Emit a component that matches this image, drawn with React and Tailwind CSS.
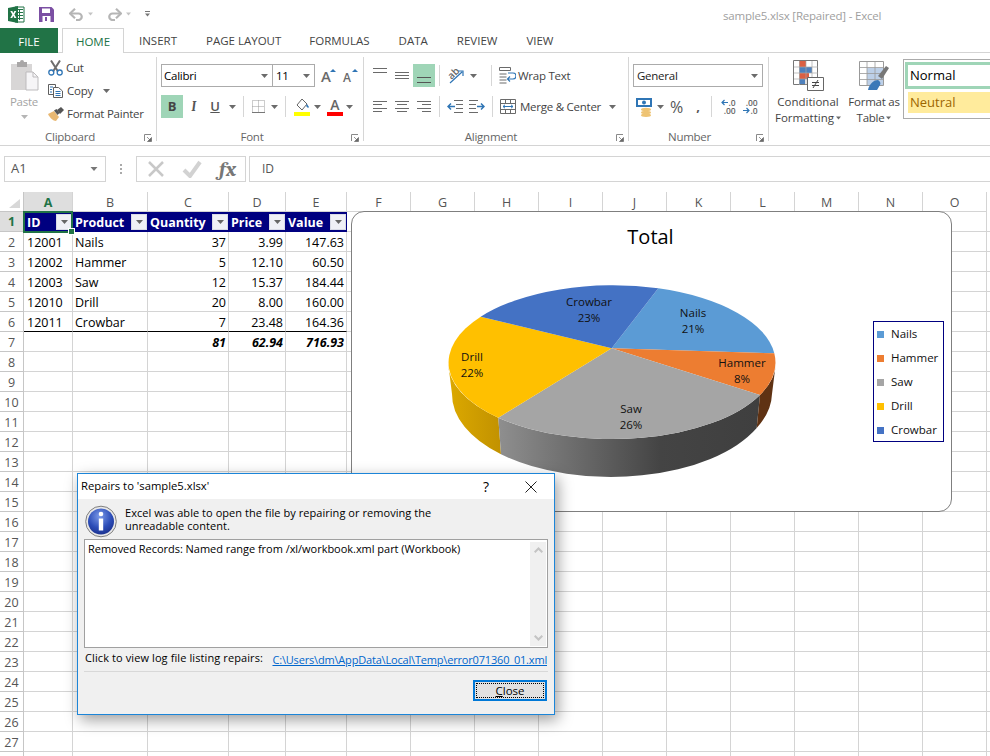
import React from 'react';

const Caret = ({ c = '#6b6b6b', w = 7 }) => (
  <svg width={w} height="4" viewBox="0 0 7 4" className="shrink-0"><path d="M0 0h7L3.5 4z" fill={c} /></svg>
);

const Lines = ({ rows, c = '#6a6a6a', w = 14, h = 14 }) => (
  <svg width={w} height={h} viewBox={`0 0 ${w} ${h}`} className="shrink-0">
    {rows.map((r, i) => <rect key={i} x={r[0]} y={r[1]} width={r[2]} height="1" fill={r[3] || c} />)}
  </svg>
);

const Launcher = () => (
  <svg width="8" height="8" viewBox="0 0 8 8" className="absolute right-[4px] top-[5px]">
    <path d="M.5 7V.5H7" fill="none" stroke="#8a8a8a" />
    <path d="M3 3l3 3M7.5 3.5v4h-4z" stroke="#6a6a6a" fill="#6a6a6a" strokeWidth=".7" />
  </svg>
);

const GroupLabel = ({ children, pad }) => (
  <div className={`relative mt-auto h-[16px] flex justify-center items-center text-[#666] ${pad}`}>
    <span>{children}</span>
    <Launcher />
  </div>
);

const Sep = () => <div className="w-px h-[84px] mt-[4px] bg-[#d6d6d6] shrink-0" />;
const MiniSep = () => <div className="w-px h-[21px] bg-[#d6d6d6] shrink-0" />;

const ExcelLogo = () => (
  <svg width="17" height="17" viewBox="0 0 17 17">
    <path d="M7 1h9v15H7z" fill="#fff" stroke="#217346" />
    <path d="M10 3.500h5M10 6.500h5M10 9.500h5M10 12.500h5" stroke="#217346" />
    <path d="M11.500 3v11" stroke="#217346" />
    <path d="M0 2l10-2v17L0 15z" fill="#217346" />
    <path d="M2.300 5h2l1 2.200L6.400 5h1.900L6.400 8.500l2 3.500h-2L5.300 9.700 4.200 12H2.300l2-3.500z" fill="#fff" />
  </svg>
);

const SaveIcon = () => (
  <svg width="15" height="15" viewBox="0 0 15 15">
    <path d="M0 0h12.500L15 2.500V15H0z" fill="#7b4fa3" />
    <path d="M3 1.500h8V6H3z" fill="#fff" />
    <path d="M3.500 9h8v6h-8z" fill="#fff" />
    <path d="M6 10h2v4H6z" fill="#7b4fa3" />
  </svg>
);

const Undo = ({ flip }) => (
  <svg width="15" height="13" viewBox="0 0 15 13" className={flip ? '-scale-x-100' : ''}>
    <path d="M2 5.500h7.500a3.200 3.200 0 0 1 0 6.500H7" fill="none" stroke="#b5b5b5" strokeWidth="2.200" />
    <path d="M6 .8L1 5.500l5 4.700" fill="none" stroke="#b5b5b5" strokeWidth="2.200" />
  </svg>
);

const ClipboardIcon = () => (
  <svg width="29" height="31" viewBox="0 0 29 31">
    <path d="M1 4h21v26H1z" fill="#d8d6d6" />
    <path d="M7 2h3a2 2 0 0 1 4 0h3v5H7z" fill="#a9a7a7" />
    <path d="M16 12h7l5 5v13H16z" fill="#f6f5f7" stroke="#bdbbbd" />
    <path d="M23 12v5h5" fill="none" stroke="#bdbbbd" />
  </svg>
);

const Scissors = () => (
  <svg width="15" height="16" viewBox="0 0 15 16">
    <path d="M3 .5l7 11M12 .5L5 11.500" stroke="#6d6d6d" strokeWidth="2" />
    <circle cx="3.300" cy="12.500" r="2.500" fill="none" stroke="#2f75b5" strokeWidth="1.300" />
    <circle cx="11.700" cy="12.500" r="2.500" fill="none" stroke="#2f75b5" strokeWidth="1.300" />
  </svg>
);

const CopyIcon = () => (
  <svg width="15" height="14" viewBox="0 0 15 14">
    <path d="M.5.500h7v10h-7z" fill="#fff" stroke="#5f5f5f" />
    <path d="M5.500 3.500h5l4 3.500v6.500h-9z" fill="#fff" stroke="#5f5f5f" />
    <path d="M2 3h3M2 5.500h2M2 8h2" stroke="#2f75b5" />
    <path d="M7.500 7.500h5M7.500 9.500h5M7.500 11.500h5" stroke="#2f75b5" />
  </svg>
);

const Brush = () => (
  <svg width="16" height="14" viewBox="0 0 16 14">
    <path d="M0 7l6-3 5 6-3 4C5 14 2 11 0 7z" fill="#e9b872" />
    <path d="M6 3.500l2.500-1.500 3 4-2 2z" fill="#555" />
    <path d="M9 3l4-3 3 3-4 4z" fill="#555" />
  </svg>
);

const FontSizeBtn = ({ small }) => (
  <div className="w-[15px] h-[18px] relative flex items-end justify-start">
    <span className={`${small ? 'text-[12px] leading-[14px]' : 'text-[15px] leading-[17px]'} font-semibold text-[#6a6a6a] tracking-normal`}>A</span>
    <svg width="6" height="3" viewBox="0 0 6 3" className="absolute right-0 top-[2px]"><path d="M0 3h6L3 0z" fill="#2f75b5" /></svg>
  </div>
);

const BorderIcon = () => (
  <svg width="13" height="13" viewBox="0 0 13 13">
    <path d="M.5.500h12v12H.5zM6.500.500v12M.5 6.500h12" fill="none" stroke="#9a9a9a" strokeDasharray="1 1" />
    <path d="M0 12.500h13" stroke="#777" />
  </svg>
);

const FillIcon = () => (
  <svg width="16" height="18" viewBox="0 0 16 18">
    <path d="M3 7l5-6 5 5-5 6z" fill="#fff" stroke="#666" />
    <path d="M13 6l2 3-1 1-2-2z" fill="#2f75b5" />
    <rect x="0" y="14" width="16" height="4" fill="#ffff00" />
  </svg>
);

const ColorA = () => (
  <div className="w-4 h-[18px] flex flex-col items-center">
    <span className="text-[14px] leading-[14px] font-semibold text-[#666] tracking-normal">A</span>
    <div className="w-4 h-1 bg-[#ff0000]" />
  </div>
);

const Orient = () => (
  <div className="relative w-[17px] h-[16px]">
    <span className="absolute left-[0px] top-[-1px] -rotate-45 text-[10px] leading-[12px] font-semibold text-[#666] tracking-normal">ab</span>
    <svg width="17" height="16" viewBox="0 0 17 16" className="absolute left-0 top-0">
      <path d="M3 15L15 4M11 3h5v5" stroke="#2f75b5" fill="none" strokeWidth="1.200" />
    </svg>
  </div>
);

const Indent = ({ rev }) => (
  <svg width="16" height="13" viewBox="0 0 16 13" className={rev ? '-scale-x-100' : ''}>
    <path d="M7 .500h9M9 4.500h7M9 8.500h7M7 12.500h9" stroke="#6a6a6a" />
    <path d="M8 6.500H1M4 3.500l-3 3 3 3" stroke="#2f75b5" fill="none" strokeWidth="1.500" />
  </svg>
);

const WrapIcon = () => (
  <svg width="17" height="17" viewBox="0 0 17 17">
    <path d="M.5.500h11v3H.5zM.5 7h7M.5 10h7M.5 13h7M.5 16h7" stroke="#6a6a6a" fill="none" />
    <path d="M9 6h5a2 2 0 0 1 0 6H9M11 9.500L8.500 12l2.500 2.500" stroke="#2f75b5" fill="none" strokeWidth="1.200" />
  </svg>
);

const MergeIcon = () => (
  <svg width="16" height="15" viewBox="0 0 16 15">
    <path d="M.5.500h15v14H.5zM.5 4.500h15M.5 10.500h15M5.500.500v4M10.500.500v4M5.500 10.500v4M10.500 10.500v4" fill="none" stroke="#6a6a6a" />
    <path d="M3 7.500h10M5 5.800L3 7.500l2 1.700M11 5.800l2 1.700-2 1.700" stroke="#2f75b5" fill="none" />
  </svg>
);

const Currency = () => (
  <svg width="17" height="20" viewBox="0 0 17 20">
    <path d="M0 1h16v9H0z" fill="#2f75b5" />
    <path d="M2 3h12v5H2z" fill="#fff" />
    <circle cx="8" cy="5.500" r="2" fill="#2f75b5" />
    <ellipse cx="10" cy="12.500" rx="5" ry="1.700" fill="#eec373" />
    <ellipse cx="10" cy="15.500" rx="5" ry="1.700" fill="#eec373" />
    <ellipse cx="10" cy="18.300" rx="5" ry="1.700" fill="#eec373" />
  </svg>
);

const Arrow = ({ rev }) => (
  <svg width="7" height="7" viewBox="0 0 7 7" className={`shrink-0 ${rev ? '-scale-x-100' : ''}`}>
    <path d="M7 3.500H1M3.500 1L1 3.500 3.500 6" fill="none" stroke="#2f75b5" strokeWidth="1.200" />
  </svg>
);

const DecIcon = ({ a, b, rev }) => (
  <div className="w-[17px] h-[16px] flex flex-col items-end text-[8.5px] leading-[8px] text-[#666] font-semibold tracking-normal">
    <div className="flex items-center w-full justify-end gap-[1px] h-2">
      {!rev && <Arrow />}
      <span>{a}</span>
    </div>
    <div className="flex items-center w-full justify-end gap-[1px] h-2">
      {rev && <Arrow rev />}
      <span>{b}</span>
    </div>
  </div>
);

const CondIcon = () => (
  <svg width="31" height="31" viewBox="0 0 31 31">
    <path d="M.5.500h24v24H.5z" fill="#fff" stroke="#777" />
    <path d="M6 1h7v6H6z" fill="#db6043" />
    <path d="M6 7h13v6H6z" fill="#4f81bd" />
    <path d="M6 13h10v6H6z" fill="#db6043" />
    <path d="M6 19h6v5H6z" fill="#4f81bd" />
    <path d="M6.500 1v24M13 1v24M19 1v24M1 7h24M1 13h24M1 19h24" stroke="#a8a8a8" fill="none" strokeWidth=".7" />
    <path d="M14.500 17.500h16v13h-16z" fill="#fff" stroke="#666" />
    <path d="M19 22.500h7M19 25.500h7M25 20l-5 8" stroke="#444" fill="none" />
  </svg>
);

const TableIcon = () => (
  <svg width="31" height="31" viewBox="0 0 31 31">
    <path d="M.5 1.500h24v24H.5z" fill="#fff" stroke="#999" />
    <path d="M8 8h16v17H8z" fill="#bdd0e8" />
    <path d="M1 7.500h24M1 13.500h24M1 19.500h24M8 2v23M16 2v23" stroke="#999" fill="none" strokeWidth=".8" />
    <path d="M19 16l8-10 3 2-7 11z" fill="#777" />
    <path d="M9 30c1-6 6-10 10-10 2 1 3 3 2 5l-3 5z" fill="#3a78b8" />
  </svg>
);

const Check = () => (
  <svg width="20" height="18" viewBox="0 0 20 18"><path d="M2 10l6 6L18 2" fill="none" stroke="#d2d2d2" strokeWidth="4" /></svg>
);
const Cross = () => (
  <svg width="18" height="18" viewBox="0 0 18 18"><path d="M2 2l14 14M16 2L2 16" fill="none" stroke="#c8c8c8" strokeWidth="2.500" /></svg>
);

const InfoIcon = () => (
  <svg width="32" height="33" viewBox="0 0 32 33" className="shrink-0">
    <defs>
      <radialGradient id="ig" cx="45%" cy="30%" r="75%">
        <stop offset="0" stopColor="#7d9be8" />
        <stop offset=".6" stopColor="#2c4db8" />
        <stop offset="1" stopColor="#1a2f8a" />
      </radialGradient>
    </defs>
    <circle cx="16" cy="16.500" r="15.300" fill="#e8e8e8" stroke="#7f7f7f" />
    <circle cx="16" cy="16.500" r="13" fill="url(#ig)" />
    <circle cx="16" cy="9" r="2.300" fill="#fff" />
    <path d="M13.800 13.500h4.400v12h-4.400z" fill="#fff" />
  </svg>
);

const columns = [
  { l: 'A', w: 'w-[49px]' }, { l: 'B', w: 'w-[75px]' }, { l: 'C', w: 'w-[81px]' }, { l: 'D', w: 'w-[57px]' }, { l: 'E', w: 'w-[61px]' },
  ...['F', 'G', 'H', 'I', 'J', 'K', 'L', 'M', 'N', 'O'].map(l => ({ l, w: 'w-16' })),
];

const head = ['ID', 'Product', 'Quantity', 'Price', 'Value'];
const data = {
  2: ['12001', 'Nails', '37', '3.99', '147.63'],
  3: ['12002', 'Hammer', '5', '12.10', '60.50'],
  4: ['12003', 'Saw', '12', '15.37', '184.44'],
  5: ['12010', 'Drill', '20', '8.00', '160.00'],
  6: ['12011', 'Crowbar', '7', '23.48', '164.36'],
  7: ['', '', '81', '62.94', '716.93'],
};

const FilterBtn = () => (
  <div className="w-[16px] h-[16px] bg-[#eff0f6] flex items-center justify-center shrink-0 border border-[#d9dbe6]">
    <Caret c="#666" />
  </div>
);

const Row = ({ n }) => {
  const isHead = n === 1;
  return (
    <div className="flex h-5">
      <div className={`w-6 shrink-0 h-5 flex items-center justify-center border-r border-b border-[#c6c6c6] text-[12.5px] ${isHead ? 'bg-[#dedede] text-[#217346] font-bold pt-[2px]' : 'text-[#555] pt-[4px]'}`}>{n <= 27 ? n : ''}</div>
      {columns.map((c, i) => {
        if (isHead && i < 5) {
          return (
            <div key={c.l} className={`${c.w} shrink-0 h-5 bg-[#000080] flex items-center justify-between ${i === 0 ? 'pl-[3px]' : 'pl-[2px]'} pr-[1px] text-white font-bold text-[12.5px] relative`}>
              <span className="mt-[2px]">{head[i]}</span>
              <FilterBtn />
              {i === 0 && (
                <div className="absolute -left-px -top-px w-[50px] h-[22px] border-2 border-[#217346] z-10">
                  <div className="absolute -right-[4px] -bottom-[4px] w-[7px] h-[7px] bg-[#217346] border border-white" />
                </div>
              )}
            </div>
          );
        }
        const v = data[n] && i < 5 ? data[n][i] : '';
        const right = i >= 2 && i < 5;
        const bottom = n === 6 && i < 5 ? 'border-b-black' : 'border-b-[#d4d4d4]';
        const total = n === 7;
        return (
          <div key={c.l} className={`${c.w} shrink-0 h-5 border-r border-b border-r-[#d4d4d4] ${bottom} flex items-center pt-[4px] text-[12.5px] text-black ${right ? 'justify-end pr-[2px]' : i === 0 ? 'pl-[3px]' : 'pl-[2px]'} ${total ? 'font-bold italic' : ''}`}>
            {v}
          </div>
        );
      })}
      <div className="w-[3px] shrink-0 h-5 border-b border-[#d4d4d4]" />
    </div>
  );
};

const slices = {
  nails: 'M611.700 348.300L658.300 288.300A164 77 0 0 1 774.300 353.300Z',
  hammer: 'M611.700 348.300L774.300 353.300A164 77 0 0 1 760 395Z',
  saw: 'M611.700 348.300L760 395A164 77 0 0 1 498.300 417.700Z',
  drill: 'M611.700 348.300L498.300 417.700A164 77 0 0 1 480.700 316.700Z',
  crowbar: 'M611.700 348.300L480.700 316.700A164 77 0 0 1 658.300 288.300Z',
};

const labels = [
  ['Crowbar', '23%', 589, 306],
  ['Nails', '21%', 693, 317],
  ['Hammer', '8%', 742, 367],
  ['Drill', '22%', 472, 361],
  ['Saw', '26%', 631, 413],
];

const legend = [
  ['Nails', 'bg-[#5b9bd5]'],
  ['Hammer', 'bg-[#ed7d31]'],
  ['Saw', 'bg-[#a5a5a5]'],
  ['Drill', 'bg-[#ffc000]'],
  ['Crowbar', 'bg-[#4472c4]'],
];

const Chart = () => (
  <div className="absolute left-[351px] top-[211px] w-[601px] h-[301px] bg-white border border-[#7f7f7f] rounded-[13px] text-[#111] overflow-hidden">
    <div className="text-center text-[20px] leading-[27px] pt-[11px] text-black -ml-[2px]">Total</div>
    <svg className="absolute -left-px -top-px" width="601" height="301" viewBox="351 211 601 301">
      <defs>
        <linearGradient id="sawSide" gradientUnits="userSpaceOnUse" x1="498" y1="0" x2="760" y2="0">
          <stop offset="0" stopColor="#8f8f8f" />
          <stop offset=".62" stopColor="#444" />
          <stop offset="1" stopColor="#3f3f3f" />
        </linearGradient>
        <linearGradient id="drillSide" gradientUnits="userSpaceOnUse" x1="448" y1="0" x2="500" y2="0">
          <stop offset="0" stopColor="#dca900" />
          <stop offset="1" stopColor="#c29200" />
        </linearGradient>
      </defs>
      <path d="M448 362A164 77 0 0 0 498.300 417.700L501 454.300A160 83 0 0 1 452 394Z" fill="url(#drillSide)" />
      <path d="M498.300 417.700A164 77 0 0 0 760 395L756.700 428A160 83 0 0 1 501 454.300Z" fill="url(#sawSide)" />
      <path d="M760 395A164 77 0 0 0 776 362L772 394A160 83 0 0 1 756.700 428Z" fill="#5f3213" />
      <path d={slices.nails} fill="#5b9bd5" />
      <path d={slices.hammer} fill="#ed7d31" />
      <path d={slices.saw} fill="#a5a5a5" />
      <path d={slices.drill} fill="#ffc000" />
      <path d={slices.crowbar} fill="#4472c4" />
      {labels.map(([a, b, x, y]) => (
        <text key={a} x={x} textAnchor="middle" fontSize="11.500" fill="#111" fontFamily="Open Sans">
          <tspan x={x} y={y}>{a}</tspan>
          <tspan x={x} y={y + 16}>{b}</tspan>
        </text>
      ))}
    </svg>
    <div className="absolute left-[521px] top-[109px] w-[71px] h-[121px] border border-[#000080] flex flex-col pl-[3px] text-[11.5px] bg-white">
      {legend.map(([t, c]) => (
        <div key={t} className="flex items-center h-6 gap-[7px] shrink-0">
          <div className={`w-[7px] h-[7px] ${c}`} />
          <span>{t}</span>
        </div>
      ))}
    </div>
  </div>
);

const Dialog = () => (
  <div className="absolute left-[77px] top-[473px] w-[478px] h-[242px] border border-[#1c85d8] bg-[#f0f0f0] shadow-[3px_5px_14px_rgba(0,0,0,0.38)] flex flex-col text-[11px] text-black z-20">
    <div className="h-[25px] bg-white flex items-center shrink-0 pl-[3px] text-[11.25px]">
      <span>Repairs to 'sample5.xlsx'</span>
      <span className="ml-auto text-[14px] w-[20px] text-center mr-[29px]">?</span>
      <svg width="12" height="12" viewBox="0 0 12 12" className="mr-[17px]"><path d="M.5.500l11 11M11.500.500l-11 11" stroke="#222" fill="none" /></svg>
    </div>
    <div className="h-[40px] shrink-0 flex pl-[7px] pt-[6px]">
      <InfoIcon />
      <div className="ml-[8px] pt-[1px] leading-[13px] tracking-[0.05px]">
        Excel was able to open the file by repairing or removing the<br />unreadable content.
      </div>
    </div>
    <div className="mx-[6px] h-[109px] shrink-0 bg-white border border-[#a0a0a0] flex justify-between pl-[3px] pt-[1px]">
      <div className="pt-[1px] leading-[14px] tracking-[-0.03px]">Removed Records: Named range from /xl/workbook.xml part (Workbook)</div>
      <div className="w-[16px] my-[1px] mr-[1px] bg-[#f0f0f0] flex flex-col justify-between items-center py-[5px]">
        <svg width="9" height="6" viewBox="0 0 9 6"><path d="M.7 5.300L4.500 1.500 8.300 5.300" fill="none" stroke="#c4c4c4" strokeWidth="2" /></svg>
        <svg width="9" height="6" viewBox="0 0 9 6"><path d="M.7.700L4.500 4.500 8.300.700" fill="none" stroke="#c4c4c4" strokeWidth="2" /></svg>
      </div>
    </div>
    <div className="mx-[6px] pl-px h-[24px] shrink-0 flex items-start border-b border-[#d8d8d8] pt-[2px]">
      <span className="leading-[15px] tracking-[0.1px]">Click to view log file listing repairs:</span>
      <span className="ml-auto mr-px mt-[3px] leading-[14px] text-[#0066cc] underline tracking-[-0.18px]">C:\Users\dm\AppData\Local\Temp\error071360_01.xml</span>
    </div>
    <div className="flex justify-end pr-[7px] pt-[8px]">
      <div className="w-[74px] h-[21px] border-2 border-[#0078d7] bg-[#e1e1e1] p-px">
        <div className="w-full h-full border border-dotted border-black flex items-center justify-center text-[11.5px]">
          <span><span className="underline">C</span>lose</span>
        </div>
      </div>
    </div>
  </div>
);

const tabs = [
  ['INSERT', 'ml-[15px]'], ['PAGE LAYOUT', 'ml-[29px]'], ['FORMULAS', 'ml-[28px]'], ['DATA', 'ml-[29px]'], ['REVIEW', 'ml-[29px]'], ['VIEW', 'ml-[29px]'],
];

export default function App() {
  const rows = Array.from({ length: 28 }, (_, i) => i + 1);
  return (
    <div className="relative w-[990px] h-[756px] overflow-hidden bg-white font-['Open_Sans',sans-serif] text-[#444] text-[11.5px]">
      {/* title bar */}
      <div className="h-7 flex items-center relative">
        <div className="ml-2"><ExcelLogo /></div>
        <div className="ml-[14px]"><SaveIcon /></div>
        <div className="ml-[15px]"><Undo /></div>
        <div className="ml-[4px]"><Caret c="#c4c4c4" w={5} /></div>
        <div className="ml-[14px]"><Undo flip /></div>
        <div className="ml-[4px]"><Caret c="#c4c4c4" w={5} /></div>
        <div className="ml-[14px] flex flex-col gap-[1px] items-center"><div className="w-[5px] h-px bg-[#777]" /><Caret c="#777" w={5} /></div>
        <div className="ml-[573px] pt-[4px] text-[#a0a0a0] text-[11.5px] tracking-[-0.2px]">sample5.xlsx [Repaired] - Excel</div>
      </div>

      {/* tabs */}
      <div className="h-[25px] flex border-b border-[#d4d4d4]">
        <div className="w-[58px] h-[25px] bg-[#217346] text-white flex items-center justify-center pt-[2px]">FILE</div>
        <div className="ml-1 w-[62px] h-[25px] bg-white border border-b-0 border-[#d4d4d4] text-[#217346] flex items-center justify-center pt-[2px]">HOME</div>
        {tabs.map(([t, m]) => <div key={t} className={`${m} flex items-center h-6 pt-[2px] text-[#444]`}>{t}</div>)}
      </div>

      {/* ribbon */}
      <div className="h-[93px] flex border-b border-[#d4d4d4] tracking-[-0.25px]">
        {/* Clipboard */}
        <div className="w-[156px] h-[92px] flex flex-col shrink-0 pt-[4px]">
          <div className="flex h-[69px]">
            <div className="w-[48px] flex flex-col items-center pt-[3px]">
              <ClipboardIcon />
              <div className="text-[#a4a4a4] mt-[3px] leading-[16px]">Paste</div>
              <div className="mt-[5px]"><Caret c="#b5b5b5" /></div>
            </div>
            <div className="flex flex-col -mt-px">
              <div className="h-[23px] flex items-center gap-[3px]"><Scissors /><span>Cut</span></div>
              <div className="h-[23px] flex items-center gap-[4px]"><CopyIcon /><span>Copy</span><span className="ml-[6px]"><Caret /></span></div>
              <div className="h-[23px] flex items-center gap-[3px]"><Brush /><span>Format Painter</span></div>
            </div>
          </div>
          <GroupLabel pad="pr-[16px]">Clipboard</GroupLabel>
        </div>
        <Sep />

        {/* Font */}
        <div className="w-[206px] h-[92px] flex flex-col shrink-0 pt-[11px] pl-[4px]">
          <div className="flex h-[23px] items-center">
            <div className="w-[112px] h-[23px] border border-[#ababab] flex items-center justify-between pl-[2px] pr-[4px] text-black"><span>Calibri</span><Caret /></div>
            <div className="w-[43px] -ml-px h-[23px] border border-[#ababab] flex items-center justify-between pl-[3px] pr-[4px] text-black"><span>11</span><Caret /></div>
            <div className="ml-[6px]"><FontSizeBtn /></div>
            <div className="ml-[7px]"><FontSizeBtn small /></div>
          </div>
          <div className="flex h-[23px] items-center mt-[8px]">
            <div className="w-[22px] h-[23px] bg-[#9fd5b7] flex items-center justify-center font-bold text-[#444] text-[13px]">B</div>
            <div className="w-[21px] text-center italic font-serif font-bold text-[13px] text-[#555]">I</div>
            <div className="w-[22px] text-center underline font-semibold text-[13px] text-[#555]">U</div>
            <div className="w-[12px] flex justify-center"><Caret /></div>
            <div className="ml-[5px]"><MiniSep /></div>
            <div className="ml-[8px]"><BorderIcon /></div>
            <div className="ml-[6px]"><Caret /></div>
            <div className="ml-[7px]"><MiniSep /></div>
            <div className="ml-[8px]"><FillIcon /></div>
            <div className="ml-[4px]"><Caret /></div>
            <div className="ml-[6px]"><ColorA /></div>
            <div className="ml-[3px]"><Caret /></div>
          </div>
          <GroupLabel pad="pr-[20px]">Font</GroupLabel>
        </div>
        <Sep />

        {/* Alignment */}
        <div className="w-[264px] h-[92px] flex flex-col shrink-0 pt-[11px] pl-[9px]">
          <div className="flex h-[23px] items-center">
            <Lines h={18} rows={[[0, 1, 14], [0, 5, 14]]} />
            <div className="ml-[8px]"><Lines h={18} rows={[[0, 5, 14], [0, 8, 14], [0, 11, 14]]} /></div>
            <div className="ml-[4px] w-[22px] h-[23px] bg-[#9fd5b7] flex items-center justify-center"><Lines h={18} rows={[[0, 10, 14], [0, 15, 14]]} c="#555" /></div>
            <div className="ml-[4px]"><MiniSep /></div>
            <div className="ml-[7px]"><Orient /></div>
            <div className="ml-[6px]"><Caret /></div>
            <div className="ml-[14px]"><MiniSep /></div>
            <div className="ml-[7px]"><WrapIcon /></div>
            <div className="ml-[2px]">Wrap Text</div>
          </div>
          <div className="flex h-[23px] items-center mt-[8px]">
            <Lines rows={[[0, 1, 14], [0, 4, 9], [0, 8, 14], [0, 11, 9]]} />
            <div className="ml-[8px]"><Lines rows={[[0, 1, 14], [2, 4, 10], [0, 8, 14], [2, 11, 10]]} /></div>
            <div className="ml-[8px]"><Lines rows={[[0, 1, 14], [5, 4, 9], [0, 8, 14], [5, 11, 9]]} /></div>
            <div className="ml-[8px]"><MiniSep /></div>
            <div className="ml-[7px]"><Indent /></div>
            <div className="ml-[6px]"><Indent rev /></div>
            <div className="ml-[7px]"><MiniSep /></div>
            <div className="ml-[7px]"><MergeIcon /></div>
            <div className="ml-[4px]">Merge &amp; Center</div>
            <div className="ml-[8px]"><Caret /></div>
          </div>
          <GroupLabel pad="pr-[19px]">Alignment</GroupLabel>
        </div>
        <Sep />

        {/* Number */}
        <div className="w-[139px] h-[92px] flex flex-col shrink-0 pt-[11px] pl-[4px]">
          <div className="w-[130px] h-[23px] border border-[#ababab] flex items-center justify-between pl-[3px] pr-[4px] text-[#222]"><span>General</span><Caret /></div>
          <div className="flex h-[23px] items-center mt-[8px]">
            <div className="ml-[3px]"><Currency /></div>
            <div className="ml-[4px]"><Caret /></div>
            <div className="ml-[6px] text-[16px] text-[#555] tracking-normal">%</div>
            <div className="ml-[13px] font-bold text-[#555] text-[13px]">,</div>
            <div className="ml-[11px]"><MiniSep /></div>
            <div className="ml-[7px]"><DecIcon a=".0" b=".00" /></div>
            <div className="ml-[5px]"><DecIcon a=".00" b=".0" rev /></div>
          </div>
          <GroupLabel pad="pr-[22px]">Number</GroupLabel>
        </div>
        <Sep />

        {/* Styles */}
        <div className="flex-1 h-[92px] flex pt-[7px]">
          <div className="w-[78px] flex flex-col items-center text-center leading-[16px] tracking-normal">
            <CondIcon />
            <div className="mt-[3px]">Conditional</div>
            <div className="flex items-center gap-[2px] whitespace-nowrap">Formatting<Caret w={5} /></div>
          </div>
          <div className="w-[54px] flex flex-col items-center text-center leading-[16px] whitespace-nowrap">
            <TableIcon />
            <div className="mt-[3px]">Format as</div>
            <div className="flex items-center gap-[2px]">Table<Caret w={5} /></div>
          </div>
          <div className="ml-[2px] h-[60px] flex-1 -mt-[1px] border border-r-0 border-[#ababab] flex flex-col pt-[2px] pl-[1px] gap-[3px] text-[13px] tracking-normal">
            <div className="h-[27px] border-[3px] border-r-0 border-[#9fd5b7] bg-white flex items-center pl-[2px] text-black">Normal</div>
            <div className="h-[21px] ml-[3px] bg-[#ffeb9c] flex items-center pl-[2px] text-[#9c6500]">Neutral</div>
          </div>
        </div>
      </div>

      {/* formula bar */}
      <div className="h-[26px] mt-[10px] flex text-[12px]">
        <div className="ml-[4px] w-[102px] border border-[#d4d4d4] flex items-center justify-between pl-[6px] pr-[7px] text-[13px] text-[#555]"><span>A1</span><Caret c="#777" w={8} /></div>
        <div className="w-[30px] flex flex-col items-center justify-center gap-[2px]">
          <div className="w-[2px] h-[2px] bg-[#aaa]" /><div className="w-[2px] h-[2px] bg-[#aaa]" /><div className="w-[2px] h-[2px] bg-[#aaa]" />
        </div>
        <div className="w-[110px] border border-[#d4d4d4] flex items-center pl-[10px]">
          <Cross />
          <div className="ml-[17px]"><Check /></div>
          <span className="ml-[17px] font-serif italic font-bold text-[#777] text-[21px] leading-none">fx</span>
        </div>
        <div className="ml-[3px] flex-1 border border-y-[#d4d4d4] border-l-[#d4d4d4] border-r-0 flex items-center pl-[12px] text-[#555]">ID</div>
      </div>

      {/* sheet */}
      <div className="mt-[10px] relative">
        <div className="flex h-5">
          <div className="w-6 h-5 shrink-0 border-r border-b border-[#c6c6c6] flex items-end justify-end pr-[3px] pb-[3px]">
            <svg width="11" height="9" viewBox="0 0 11 9"><path d="M11 0v9H0z" fill="#d8d8d8" /></svg>
          </div>
          {columns.map((c, i) => (
            <div key={c.l} className={`${c.w} shrink-0 h-5 border-r border-b border-[#d4d4d4] flex items-center justify-center pt-[4px] text-[12.5px] ${i === 0 ? 'bg-[#dedede] text-[#217346] font-bold' : 'text-[#555]'}`}>{c.l}</div>
          ))}
        </div>
        {rows.map(n => <Row key={n} n={n} />)}
      </div>

      <Chart />
      <Dialog />
    </div>
  );
}
